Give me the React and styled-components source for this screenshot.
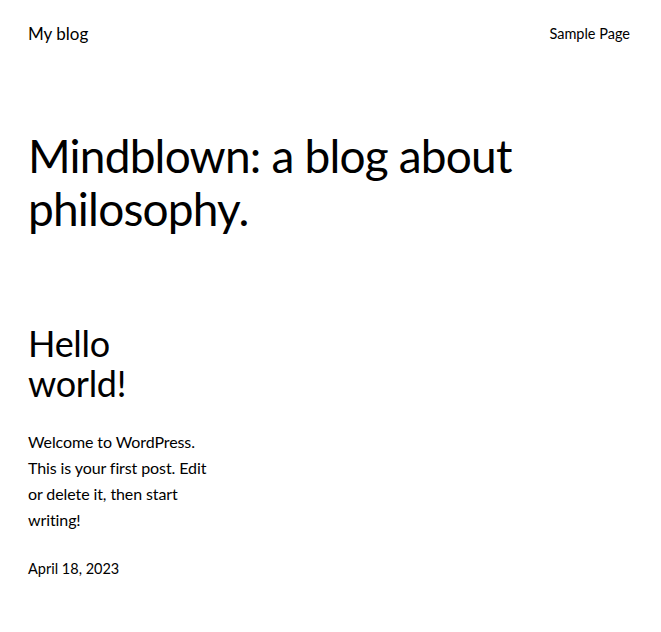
import styled, { createGlobalStyle } from "styled-components";

const GlobalStyle = createGlobalStyle`
  body {
    margin: 0;
    background: #ffffff;
    color: #000000;
    font-family: "Lato", "Noto Sans", sans-serif;
  }
  * {
    box-sizing: border-box;
  }
`;

const Page = styled.div`
  padding: 0 31px 0 28px;
`;

const Header = styled.header`
  display: flex;
  justify-content: space-between;
  align-items: center;
  padding-top: 21px;
  height: 46px;
`;

const SiteTitle = styled.a`
  font-size: 17px;
  color: #000;
  text-decoration: none;
`;

const NavLink = styled.a`
  font-size: 14.5px;
  color: #000;
  text-decoration: none;
`;

const Hero = styled.h1`
  font-size: 46px;
  font-weight: 400;
  line-height: 53px;
  letter-spacing: -0.8px;
  margin: 83px 0 0;
  max-width: 540px;
`;

const PostGrid = styled.div`
  display: grid;
  grid-template-columns: repeat(3, 1fr);
  gap: 24px;
  margin-top: 88px;
`;

const Post = styled.article`
  display: flex;
  flex-direction: column;
`;

const PostTitle = styled.h2`
  font-size: 36px;
  font-weight: 400;
  line-height: 40px;
  letter-spacing: -0.3px;
  margin: 0;
`;

const Excerpt = styled.p`
  font-size: 16px;
  line-height: 26px;
  letter-spacing: -0.1px;
  margin: 26px 0 0;
`;

const PostDate = styled.time`
  font-size: 14.5px;
  margin-top: 27px;
`;

export default function App() {
  return (
    <>
      <GlobalStyle />
      <Page>
        <Header>
          <SiteTitle href="#">My blog</SiteTitle>
          <NavLink href="#">Sample Page</NavLink>
        </Header>
        <Hero>Mindblown: a blog about philosophy.</Hero>
        <PostGrid>
          <Post>
            <PostTitle>Hello world!</PostTitle>
            <Excerpt>
              Welcome to WordPress. This is your first post. Edit or delete it,
              then start writing!
            </Excerpt>
            <PostDate>April 18, 2023</PostDate>
          </Post>
        </PostGrid>
      </Page>
    </>
  );
}
